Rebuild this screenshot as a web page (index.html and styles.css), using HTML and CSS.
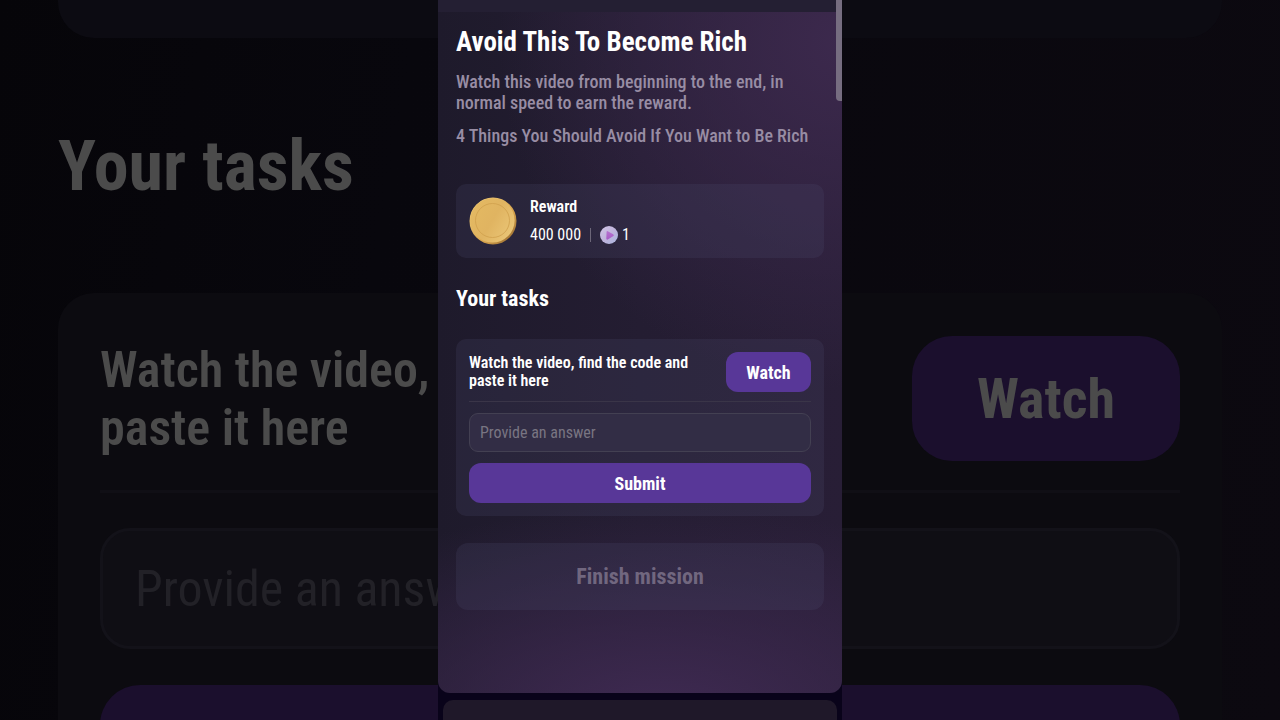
FILE: index.html
```
<!DOCTYPE html>
<html lang="en">
  <head>
    <meta charset="UTF-8" />
    <meta name="viewport" content="width=device-width, initial-scale=1.0" />
    <title>Avoid This To Become Rich</title>
    <link rel="stylesheet" href="styles.css">
  </head>
  <body>
    <!-- enlarged, dimmed copy behind the phone -->
    <div class="backdrop">
      <div class="big-top"></div>
      <h2 class="big-title">Your tasks</h2>
      <div class="big-card">
        <div class="big-row">
          <p class="big-text">Watch the video,<br>paste it here</p>
          <button class="big-watch" type="button">Watch</button>
        </div>
        <input class="big-input" type="text" placeholder="Provide an answer" aria-label="Answer">
        <button class="big-submit" type="button" aria-label="Submit"></button>
      </div>
    </div>

    <div class="phone">
      <main class="sheet">
        <div class="strip"></div>
        <div class="scroll-thumb"></div>
        <div class="content">
          <h1 class="title">Avoid This To Become Rich</h1>
          <p class="desc">Watch this video from beginning to the end, in normal speed to earn the reward.</p>
          <p class="desc">4 Things You Should Avoid If You Want to Be Rich</p>

          <section class="card reward">
            <svg class="coin" viewBox="0 0 48 48">
              <defs>
                <linearGradient id="edge" x1="0" y1="0" x2="1" y2="1">
                  <stop offset="0" stop-color="#f6d583" />
                  <stop offset="0.6" stop-color="#d9a64e" />
                  <stop offset="1" stop-color="#8a5f2a" />
                </linearGradient>
                <linearGradient id="face" x1="0" y1="0.2" x2="1" y2="0.8">
                  <stop offset="0" stop-color="#e4b962" />
                  <stop offset="0.5" stop-color="#e0b461" />
                  <stop offset="1" stop-color="#ebc778" />
                </linearGradient>
              </defs>
              <circle cx="24" cy="24" r="23.5" fill="url(#edge)" />
              <circle cx="23.4" cy="23.4" r="22.2" fill="url(#face)" />
              <circle cx="23.5" cy="23.5" r="17" fill="none" stroke="#cf9f4c" stroke-width="0.8" />
            </svg>
            <div class="reward-info">
              <h3 class="reward-title">Reward</h3>
              <div class="reward-values">
                <span>400 000</span>
                <span class="bar"></span>
                <span class="ticket">
                  <svg class="play" viewBox="0 0 18 18">
                    <defs>
                      <linearGradient id="disc" x1="0" y1="0" x2="1" y2="1">
                        <stop offset="0" stop-color="#d2c5e6" />
                        <stop offset="0.5" stop-color="#c0b4dc" />
                        <stop offset="1" stop-color="#a9b6df" />
                      </linearGradient>
                      <linearGradient id="tri" x1="0" y1="0" x2="0" y2="1">
                        <stop offset="0" stop-color="#b673cf" />
                        <stop offset="1" stop-color="#a85cc6" />
                      </linearGradient>
                    </defs>
                    <circle cx="9" cy="9" r="9" fill="url(#disc)" />
                    <path d="M6.6 5.9 Q6.6 4.8 7.7 5.2 L13.2 8.3 Q14.6 9.3 13.4 10.1 L7.8 13.5 Q6.2 14 6.3 12.5 Z" fill="url(#tri)" />
                  </svg>
                  <span>1</span>
                </span>
              </div>
            </div>
          </section>

          <h2 class="subtitle">Your tasks</h2>

          <section class="card">
            <div class="task-row">
              <label class="task-text" for="answer">Watch the video, find the code and paste it here</label>
              <button class="btn btn-watch" type="button">Watch</button>
            </div>
            <form class="task-form">
              <input class="answer" id="answer" type="text" placeholder="Provide an answer">
              <button class="btn" type="button">Submit</button>
            </form>
          </section>

          <button class="finish" type="button" disabled>Finish mission</button>
        </div>
      </main>
      <div class="next-sheet"></div>
    </div>
  </body>
</html>
```
FILE: styles.css
```
* {
  margin: 0;
  padding: 0;
  box-sizing: border-box;
}

body {
  display: grid;
  grid-template-columns: 100%;
  grid-template-rows: 100vh;
  overflow: hidden;
  background: #08070d;
  color: #fff;
  font-family: "Roboto Condensed", "Liberation Sans Narrow", Roboto, sans-serif;
}

button,
input {
  border: 0;
  outline: 0;
  font-family: inherit;
  color: inherit;
}

/* backdrop */
.backdrop {
  grid-area: 1 / 1;
  overflow: hidden;
  padding: 0 58px;
  background: linear-gradient(100deg, #060509, #08070d 30%, #0c0910);
  color: #4b4b4b;
}

.big-top {
  height: 38px;
  border-radius: 0 0 36px 36px;
  background: #0c0b12;
}

.big-title {
  margin: 88px 0 87px;
  font-size: 70px;
  line-height: 80px;
}

.big-card {
  padding: 43px 42px;
  border-radius: 36px;
  background: #0c0b10;
}

.big-row {
  display: flex;
  align-items: center;
  justify-content: space-between;
  padding-bottom: 29px;
  border-bottom: 3px solid #100f15;
}

.big-text {
  font-size: 50px;
  line-height: 58px;
  font-weight: 600;
}

.big-watch {
  width: 268px;
  height: 125px;
  border-radius: 40px;
  background: #1b0f2d;
  font-size: 56px;
  font-weight: bold;
}

.big-input {
  display: block;
  width: 100%;
  height: 121px;
  margin: 35px 0 36px;
  padding: 0 32px;
  border: 3px solid #131219;
  border-radius: 30px;
  background: #0f0e14;
  font-size: 50px;
}

.big-input::placeholder {
  color: #222127;
}

.big-submit {
  display: block;
  width: 100%;
  height: 125px;
  border-radius: 40px;
  background: #1b0f2d;
}

/* phone */
.phone {
  grid-area: 1 / 1;
  justify-self: center;
  display: flex;
  flex-direction: column;
  gap: 7px;
  width: 100%;
  max-width: 404px;
  overflow: hidden;
  background: #09031a;
}

.sheet {
  position: relative;
  flex-shrink: 0;
  padding-bottom: 83px;
  overflow: hidden;
  border-radius: 0 0 12px 12px;
  background:
    radial-gradient(ellipse 110% 30% at 55% 103%, #3f2a52, transparent),
    radial-gradient(ellipse 85% 50% at 100% 6%, #3c294d, transparent),
    linear-gradient(90deg, #1e1a2b, #241d32 50%, #281e36);
}

.strip {
  height: 12px;
  background: #241f33;
}

.scroll-thumb {
  position: absolute;
  top: 0;
  right: 0;
  width: 6px;
  height: 101px;
  border-radius: 0 0 0 4px;
  background: #766d80;
}

.content {
  padding: 14px 18px 0;
}

.title {
  margin-bottom: 13px;
  font-size: 27px;
  line-height: 32px;
}

.desc {
  margin-bottom: 12px;
  color: #988da4;
  font-size: 18px;
  line-height: 21px;
  font-weight: 500;
}

.card {
  padding: 13px;
  border-radius: 10px;
  background: rgba(80, 80, 115, 0.2);
}

.reward {
  display: flex;
  align-items: center;
  gap: 13px;
  margin-top: 38px;
}

.coin {
  width: 48px;
  height: 48px;
}

.reward-info {
  display: flex;
  flex-direction: column;
  gap: 8px;
}

.reward-title {
  font-size: 16px;
  line-height: 20px;
  font-weight: 600;
}

.reward-values {
  display: flex;
  align-items: center;
  gap: 9px;
  font-size: 16px;
  line-height: 20px;
}

.bar {
  width: 1px;
  height: 14px;
  background: #6c6678;
}

.ticket {
  display: flex;
  align-items: center;
  gap: 4px;
}

.play {
  width: 18px;
  height: 18px;
}

.subtitle {
  margin: 27px 0 26px;
  font-size: 22px;
  line-height: 28px;
}

.task-row {
  display: flex;
  align-items: center;
  justify-content: space-between;
  gap: 24px;
  padding-bottom: 9px;
  border-bottom: 1px solid #3a3548;
}

.task-text {
  font-size: 16px;
  line-height: 18px;
  font-weight: 600;
}

.btn {
  height: 40px;
  border-radius: 12px;
  background: #583798;
  font-size: 18px;
  font-weight: bold;
}

.btn-watch {
  flex: 0 0 85px;
}

.task-form {
  display: flex;
  flex-direction: column;
  gap: 11px;
  padding-top: 11px;
}

.answer {
  height: 39px;
  padding: 0 10px;
  border: 1px solid #434052;
  border-radius: 9px;
  background: #322d45;
  font-size: 16px;
}

.answer::placeholder {
  color: #797582;
}

.finish {
  display: block;
  width: 100%;
  height: 67px;
  margin-top: 27px;
  border-radius: 12px;
  background: rgba(80, 80, 115, 0.2);
  color: #71677f;
  font-size: 22px;
  font-weight: bold;
}

.next-sheet {
  flex: 1 0 20px;
  margin: 0 5px;
  border-radius: 10px 10px 0 0;
  background: #1f1829;
}
```
